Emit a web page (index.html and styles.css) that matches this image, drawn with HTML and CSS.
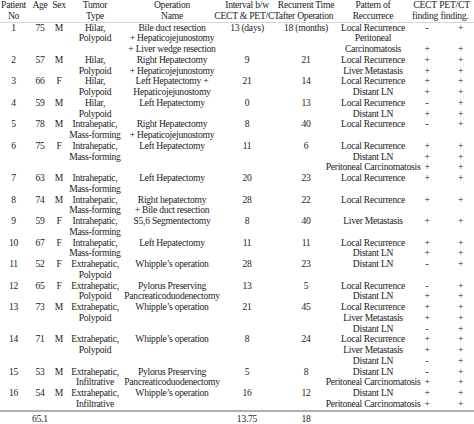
FILE: index.html
```html
<!DOCTYPE html>
<html>
<head>
<meta charset="utf-8">
<link rel="stylesheet" href="styles.css">
</head>
<body>
<table class="tbl">
  <colgroup>
    <col class="w-no"><col class="w-age"><col class="w-sex"><col class="w-tumor"><col class="w-op">
    <col class="w-int"><col class="w-rec"><col class="w-pat"><col class="w-cect"><col class="w-pet">
  </colgroup>
  <thead>
    <tr>
      <th><div class="c"><span>Patient</span><span>No</span></div></th>
      <th><div class="c"><span>Age</span></div></th>
      <th><div class="c"><span>Sex</span></div></th>
      <th><div class="c"><span>Tumor</span><span>Type</span></div></th>
      <th><div class="c"><span>Operation</span><span>Name</span></div></th>
      <th><div class="c"><span>Interval b/w</span><span>CECT &amp; PET/CT</span></div></th>
      <th><div class="c"><span>Recurrent Time</span><span>after Operation</span></div></th>
      <th><div class="c"><span>Pattern of</span><span>Reccurrece</span></div></th>
      <th class="h-cect"><div class="c"><span>CECT</span><span>finding</span></div></th>
      <th class="h-pet"><div class="c"><span>PET/CT</span><span>finding.</span></div></th>
    </tr>
  </thead>
  <tbody>
    <tr class="first">
      <td><div class="c"><span>1</span></div></td>
      <td><div class="c"><span>75</span></div></td>
      <td><div class="c"><span>M</span></div></td>
      <td><div class="c"><span>Hilar,</span><span>Polypoid</span></div></td>
      <td><div class="c"><span>Bile duct resection</span><span>+ Hepaticojejunostomy</span><span>+ Liver wedge resection</span></div></td>
      <td><div class="c"><span>13 (days)</span></div></td>
      <td><div class="c"><span>18 (months)</span></div></td>
      <td><div class="c"><span>Local Recurrence</span><span>Peritoneal</span><span>Carcinomatosis</span></div></td>
      <td><div class="c"><span>-</span><span>&nbsp;</span><span>+</span></div></td>
      <td><div class="c"><span>+</span><span>&nbsp;</span><span>+</span></div></td>
    </tr>
    <tr>
      <td><div class="c"><span>2</span></div></td>
      <td><div class="c"><span>57</span></div></td>
      <td><div class="c"><span>M</span></div></td>
      <td><div class="c"><span>Hilar,</span><span>Polypoid</span></div></td>
      <td><div class="c"><span>Right Hepatectomy</span><span>+ Hepaticojejunostomy</span></div></td>
      <td><div class="c"><span>9</span></div></td>
      <td><div class="c"><span>21</span></div></td>
      <td><div class="c"><span>Local Recurrence</span><span>Liver Metastasis</span></div></td>
      <td><div class="c"><span>+</span><span>+</span></div></td>
      <td><div class="c"><span>+</span><span>+</span></div></td>
    </tr>
    <tr>
      <td><div class="c"><span>3</span></div></td>
      <td><div class="c"><span>66</span></div></td>
      <td><div class="c"><span>F</span></div></td>
      <td><div class="c"><span>Hilar,</span><span>Polypoid</span></div></td>
      <td><div class="c"><span>Left Hepatectomy +</span><span>Hepaticojejunostomy</span></div></td>
      <td><div class="c"><span>21</span></div></td>
      <td><div class="c"><span>14</span></div></td>
      <td><div class="c"><span>Local Recurrence</span><span>Distant LN</span></div></td>
      <td><div class="c"><span>+</span><span>+</span></div></td>
      <td><div class="c"><span>+</span><span>+</span></div></td>
    </tr>
    <tr>
      <td><div class="c"><span>4</span></div></td>
      <td><div class="c"><span>59</span></div></td>
      <td><div class="c"><span>M</span></div></td>
      <td><div class="c"><span>Hilar,</span><span>Polypoid</span></div></td>
      <td><div class="c"><span>Left Hepatectomy</span></div></td>
      <td><div class="c"><span>0</span></div></td>
      <td><div class="c"><span>13</span></div></td>
      <td><div class="c"><span>Local Recurrence</span><span>Distant LN</span></div></td>
      <td><div class="c"><span>-</span><span>+</span></div></td>
      <td><div class="c"><span>+</span><span>+</span></div></td>
    </tr>
    <tr>
      <td><div class="c"><span>5</span></div></td>
      <td><div class="c"><span>78</span></div></td>
      <td><div class="c"><span>M</span></div></td>
      <td><div class="c"><span>Intrahepatic,</span><span>Mass-forming</span></div></td>
      <td><div class="c"><span>Right Hepatectomy</span><span>+ Hepaticojejunostomy</span></div></td>
      <td><div class="c"><span>8</span></div></td>
      <td><div class="c"><span>40</span></div></td>
      <td><div class="c"><span>Local Recurrence</span></div></td>
      <td><div class="c"><span>-</span></div></td>
      <td><div class="c"><span>+</span></div></td>
    </tr>
    <tr>
      <td><div class="c"><span>6</span></div></td>
      <td><div class="c"><span>75</span></div></td>
      <td><div class="c"><span>F</span></div></td>
      <td><div class="c"><span>Intrahepatic,</span><span>Mass-forming</span></div></td>
      <td><div class="c"><span>Left Hepatectomy</span></div></td>
      <td><div class="c"><span>11</span></div></td>
      <td><div class="c"><span>6</span></div></td>
      <td><div class="c"><span>Local Recurrence</span><span>Distant LN</span><span>Peritoneal Carcinomatosis</span></div></td>
      <td><div class="c"><span>+</span><span>+</span><span>+</span></div></td>
      <td><div class="c"><span>+</span><span>+</span><span>+</span></div></td>
    </tr>
    <tr>
      <td><div class="c"><span>7</span></div></td>
      <td><div class="c"><span>63</span></div></td>
      <td><div class="c"><span>M</span></div></td>
      <td><div class="c"><span>Intrahepatic,</span><span>Mass-forming</span></div></td>
      <td><div class="c"><span>Left Hepatectomy</span></div></td>
      <td><div class="c"><span>20</span></div></td>
      <td><div class="c"><span>23</span></div></td>
      <td><div class="c"><span>Local Recurrence</span></div></td>
      <td><div class="c"><span>+</span></div></td>
      <td><div class="c"><span>+</span></div></td>
    </tr>
    <tr>
      <td><div class="c"><span>8</span></div></td>
      <td><div class="c"><span>74</span></div></td>
      <td><div class="c"><span>M</span></div></td>
      <td><div class="c"><span>Intrahepatic,</span><span>Mass-forming</span></div></td>
      <td><div class="c"><span>Right hepatectomy</span><span>+ Bile duct resection</span></div></td>
      <td><div class="c"><span>28</span></div></td>
      <td><div class="c"><span>22</span></div></td>
      <td><div class="c"><span>Local Recurrence</span></div></td>
      <td><div class="c"><span>+</span></div></td>
      <td><div class="c"><span>+</span></div></td>
    </tr>
    <tr>
      <td><div class="c"><span>9</span></div></td>
      <td><div class="c"><span>59</span></div></td>
      <td><div class="c"><span>F</span></div></td>
      <td><div class="c"><span>Intrahepatic,</span><span>Mass-forming</span></div></td>
      <td><div class="c"><span>S5,6 Segmentectomy</span></div></td>
      <td><div class="c"><span>8</span></div></td>
      <td><div class="c"><span>40</span></div></td>
      <td><div class="c"><span>Liver Metastasis</span></div></td>
      <td><div class="c"><span>+</span></div></td>
      <td><div class="c"><span>+</span></div></td>
    </tr>
    <tr>
      <td><div class="c"><span>10</span></div></td>
      <td><div class="c"><span>67</span></div></td>
      <td><div class="c"><span>F</span></div></td>
      <td><div class="c"><span>Intrahepatic,</span><span>Mass-forming</span></div></td>
      <td><div class="c"><span>Left Hepatectomy</span></div></td>
      <td><div class="c"><span>11</span></div></td>
      <td><div class="c"><span>11</span></div></td>
      <td><div class="c"><span>Local Recurrence</span><span>Distant LN</span></div></td>
      <td><div class="c"><span>+</span><span>+</span></div></td>
      <td><div class="c"><span>+</span><span>+</span></div></td>
    </tr>
    <tr>
      <td><div class="c"><span>11</span></div></td>
      <td><div class="c"><span>52</span></div></td>
      <td><div class="c"><span>F</span></div></td>
      <td><div class="c"><span>Extrahepatic,</span><span>Polypoid</span></div></td>
      <td><div class="c"><span>Whipple’s operation</span></div></td>
      <td><div class="c"><span>28</span></div></td>
      <td><div class="c"><span>23</span></div></td>
      <td><div class="c"><span>Distant LN</span></div></td>
      <td><div class="c"><span>-</span></div></td>
      <td><div class="c"><span>+</span></div></td>
    </tr>
    <tr>
      <td><div class="c"><span>12</span></div></td>
      <td><div class="c"><span>65</span></div></td>
      <td><div class="c"><span>F</span></div></td>
      <td><div class="c"><span>Extrahepatic,</span><span>Polypoid</span></div></td>
      <td><div class="c"><span>Pylorus Preserving</span><span>Pancreaticoduodenectomy</span></div></td>
      <td><div class="c"><span>13</span></div></td>
      <td><div class="c"><span>5</span></div></td>
      <td><div class="c"><span>Local Recurrence</span><span>Distant LN</span></div></td>
      <td><div class="c"><span>-</span><span>+</span></div></td>
      <td><div class="c"><span>+</span><span>+</span></div></td>
    </tr>
    <tr>
      <td><div class="c"><span>13</span></div></td>
      <td><div class="c"><span>73</span></div></td>
      <td><div class="c"><span>M</span></div></td>
      <td><div class="c"><span>Extrahepatic,</span><span>Polypoid</span></div></td>
      <td><div class="c"><span>Whipple’s operation</span></div></td>
      <td><div class="c"><span>21</span></div></td>
      <td><div class="c"><span>45</span></div></td>
      <td><div class="c"><span>Local Recurrence</span><span>Liver Metastasis</span><span>Distant LN</span></div></td>
      <td><div class="c"><span>+</span><span>+</span><span>-</span></div></td>
      <td><div class="c"><span>+</span><span>+</span><span>+</span></div></td>
    </tr>
    <tr>
      <td><div class="c"><span>14</span></div></td>
      <td><div class="c"><span>71</span></div></td>
      <td><div class="c"><span>M</span></div></td>
      <td><div class="c"><span>Extrahepatic,</span><span>Polypoid</span></div></td>
      <td><div class="c"><span>Whipple’s operation</span></div></td>
      <td><div class="c"><span>8</span></div></td>
      <td><div class="c"><span>24</span></div></td>
      <td><div class="c"><span>Local Recurrence</span><span>Liver Metastasis</span><span>Distant LN</span></div></td>
      <td><div class="c"><span>+</span><span>+</span><span>-</span></div></td>
      <td><div class="c"><span>+</span><span>+</span><span>+</span></div></td>
    </tr>
    <tr>
      <td><div class="c"><span>15</span></div></td>
      <td><div class="c"><span>53</span></div></td>
      <td><div class="c"><span>M</span></div></td>
      <td><div class="c"><span>Extrahepatic,</span><span>Infiltrative</span></div></td>
      <td><div class="c"><span>Pylorus Preserving</span><span>Pancreaticoduodenectomy</span></div></td>
      <td><div class="c"><span>5</span></div></td>
      <td><div class="c"><span>8</span></div></td>
      <td><div class="c"><span>Distant LN</span><span>Peritoneal Carcinomatosis</span></div></td>
      <td><div class="c"><span>-</span><span>+</span></div></td>
      <td><div class="c"><span>+</span><span>+</span></div></td>
    </tr>
    <tr>
      <td><div class="c"><span>16</span></div></td>
      <td><div class="c"><span>54</span></div></td>
      <td><div class="c"><span>M</span></div></td>
      <td><div class="c"><span>Extrahepatic,</span><span>Infiltrative</span></div></td>
      <td><div class="c"><span>Whipple’s operation</span></div></td>
      <td><div class="c"><span>16</span></div></td>
      <td><div class="c"><span>12</span></div></td>
      <td><div class="c"><span>Distant LN</span><span>Peritoneal Carcinomatosis</span></div></td>
      <td><div class="c"><span>+</span><span>+</span></div></td>
      <td><div class="c"><span>+</span><span>+</span></div></td>
    </tr>
  </tbody>
  <tfoot>
    <tr>
      <td></td>
      <td><div class="c"><span>65.1</span></div></td>
      <td></td>
      <td></td>
      <td></td>
      <td><div class="c"><span>13.75</span></div></td>
      <td><div class="c"><span>18</span></div></td>
      <td></td>
      <td></td>
      <td></td>
    </tr>
  </tfoot>
</table>
</body>
</html>
```

FILE: styles.css
```css
html, body {
  margin: 0;
  padding: 0;
  background: #ffffff;
  overflow: hidden;
}

.tbl {
  border-collapse: collapse;
  table-layout: fixed;
  width: 476px;
  margin: 0 0 0 -2px;
  font-family: "Liberation Serif", "Times New Roman", serif;
  font-size: 9.6px;
  letter-spacing: -0.25px;
  line-height: 10.75px;
  color: #1c1c1c;
}

.w-no { width: 31px; }
.w-age { width: 22px; }
.w-sex { width: 16px; }
.w-tumor { width: 56px; }
.w-op { width: 98px; }
.w-int { width: 52px; }
.w-rec { width: 66px; }
.w-pat { width: 68px; }
.w-cect { width: 40px; }
.w-pet { width: 27px; }

.tbl th,
.tbl td {
  padding: 0;
  vertical-align: top;
  font-weight: normal;
}

.tbl thead th {
  border-bottom: 1px solid #d6d6d6;
}

.tbl .h-cect .c {
  padding-right: 4px;
}

.tbl .h-pet .c {
  padding-right: 12px;
}

.tbl tfoot td {
  border-top: 2px solid #b0b0b0;
  padding-top: 2px;
}

.c {
  display: flex;
  flex-direction: column;
  align-items: center;
  white-space: nowrap;
}

.c span {
  display: block;
}
```
